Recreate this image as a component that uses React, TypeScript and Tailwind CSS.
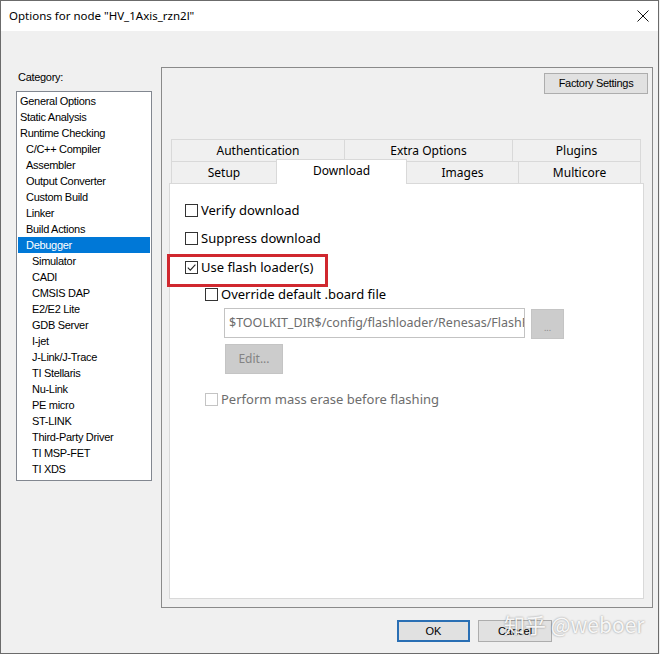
import React from "react"

const categories: [string, number, boolean?][] = [
  ["General Options", 0],
  ["Static Analysis", 0],
  ["Runtime Checking", 0],
  ["C/C++ Compiler", 1],
  ["Assembler", 1],
  ["Output Converter", 1],
  ["Custom Build", 1],
  ["Linker", 1],
  ["Build Actions", 1],
  ["Debugger", 1, true],
  ["Simulator", 2],
  ["CADI", 2],
  ["CMSIS DAP", 2],
  ["E2/E2 Lite", 2],
  ["GDB Server", 2],
  ["I-jet", 2],
  ["J-Link/J-Trace", 2],
  ["TI Stellaris", 2],
  ["Nu-Link", 2],
  ["PE micro", 2],
  ["ST-LINK", 2],
  ["Third-Party Driver", 2],
  ["TI MSP-FET", 2],
  ["TI XDS", 2],
]

const indent = ["pl-[2px]", "pl-[8px]", "pl-[14px]"]

function CheckBox({ checked = false, disabled = false }: { checked?: boolean; disabled?: boolean }) {
  return (
    <div
      className={
        "w-[13px] h-[13px] shrink-0 bg-white border flex items-center justify-center " +
        (disabled ? "border-[#c4c4c4]" : "border-[#333333]")
      }
    >
      {checked && (
        <svg width="11" height="11" viewBox="0 0 11 11">
          <path d="M1.8 5.6 L4.3 8.1 L9.4 2.6" fill="none" stroke="#222" strokeWidth="1.1" />
        </svg>
      )}
    </div>
  )
}

function Option({ label, checked, disabled, className = "" }: { label: string; checked?: boolean; disabled?: boolean; className?: string }) {
  return (
    <div className={"flex items-center h-[13px] " + className}>
      <CheckBox checked={checked} disabled={disabled} />
      <span className={"ml-[3px] text-[13px] whitespace-nowrap " + (disabled ? "text-[#6d6d6d]" : "text-black")}>
        {label}
      </span>
    </div>
  )
}

export default function App() {
  const tab = "flex items-center justify-center h-[22px] border-t border-l border-[#d9d9d9] bg-[#f0f0f0] text-[12px] text-black"

  return (
    <div className="relative w-[660px] h-[654px] bg-[#f0f0f0] font-['Noto_Sans',sans-serif]">
      <div className="w-[659px] h-[654px] border border-[#6b6b6b] flex flex-col">
        {/* title bar */}
        <div className="h-[30px] bg-white flex items-center justify-between pl-[8px] pr-[9px]">
          <span className="text-[11.5px] text-black">Options for node "HV_1Axis_rzn2l"</span>
          <svg width="12" height="12" viewBox="0 0 12 12">
            <path d="M0.5 0.5 L11.5 11.5 M11.5 0.5 L0.5 11.5" stroke="#111" strokeWidth="1" />
          </svg>
        </div>

        <div className="flex font-['Liberation_Sans',sans-serif] tracking-[-0.3px]">
          {/* category list */}
          <div className="ml-[15px] w-[136px] pt-[39px]">
            <div className="h-[14px] leading-[14px] text-[11px] text-black pl-[2px]">Category:</div>
            <div className="mt-[7px] h-[390px] border border-[#828790] bg-white pt-[1px] px-[1px]">
              {categories.map(([name, level, sel]) => (
                <div
                  key={name}
                  className={
                    "h-[16px] leading-[16px] text-[11px] whitespace-nowrap " +
                    indent[level] +
                    (sel ? " bg-[#0078d7] text-white" : " text-black")
                  }
                >
                  {name}
                </div>
              ))}
            </div>
          </div>

          {/* options panel */}
          <div className="ml-[9px] mt-[36px] w-[492px] h-[541px] border border-[#8a8a8a] flex flex-col">
            <div className="flex justify-end pt-[5px] pr-[4px]">
              <div className="w-[104px] h-[21px] bg-[#e1e1e1] border border-[#adadad] flex items-center justify-center text-[11px] text-black">
                Factory Settings
              </div>
            </div>

            <div className="ml-[7px] mt-[45px] w-[475px] font-['Noto_Sans',sans-serif] tracking-normal">
              <div className="flex pl-[2px]">
                <div className={tab + " w-[173px]"}>Authentication</div>
                <div className={tab + " w-[168px]"}>Extra Options</div>
                <div className={tab + " w-[129px] border-r"}>Plugins</div>
              </div>
              <div className="flex pl-[2px] h-[22px]">
                <div className={tab + " w-[105px]"}>Setup</div>
                <div className="relative z-10 -mt-[2px] h-[25px] w-[131px] bg-white border-t border-l border-r border-[#d9d9d9] flex items-start justify-center pt-[2px] text-[12px] text-black">
                  Download
                </div>
                <div className={tab + " w-[111px] border-l-0"}>Images</div>
                <div className={tab + " w-[123px] border-r"}>Multicore</div>
              </div>

              <div className="h-[416px] bg-white border border-[#d9d9d9] pt-[20px] pl-[15px] flex flex-col">
                <Option label="Verify download" />
                <Option label="Suppress download" className="mt-[15px]" />
                <Option label="Use flash loader(s)" checked className="mt-[16px]" />
                <Option label="Override default .board file" className="mt-[14px] ml-[20px]" />
                <div className="flex mt-[7px] ml-[39px]">
                  <div className="w-[301px] h-[30px] border border-[#c3c3c3] bg-white flex items-center pl-[4px] overflow-hidden">
                    <span className="text-[12.5px] text-[#6d6d6d] whitespace-nowrap">
                      $TOOLKIT_DIR$/config/flashloader/Renesas/FlashRZN2L.board
                    </span>
                  </div>
                  <div className="ml-[6px] mt-[1px] w-[33px] h-[30px] bg-[#cccccc] border border-[#c4c4c4] flex items-end justify-center pb-[6px] text-[9px] leading-[9px] text-[#8a8a8a]">
                    ...
                  </div>
                </div>
                <div className="mt-[5px] ml-[40px] w-[58px] h-[30px] bg-[#cccccc] border border-[#c4c4c4] flex items-center justify-center text-[12px] text-[#838383]">
                  Edit...
                </div>
                <Option label="Perform mass erase before flashing" disabled className="mt-[19px] ml-[20px]" />
              </div>
            </div>
          </div>
        </div>

        {/* dialog buttons */}
        <div className="flex mt-[12px] pl-[396px] font-['Liberation_Sans',sans-serif]">
          <div className="w-[73px] h-[22px] bg-[#e1e1e1] border-2 border-[#2a6fb4] flex items-center justify-center text-[11px] text-black">
            OK
          </div>
          <div className="ml-[8px] w-[74px] h-[22px] bg-[#e1e1e1] border border-[#adadad] flex items-center justify-center text-[11px] text-black">
            Cancel
          </div>
        </div>
      </div>

      {/* annotation */}
      <div className="absolute left-[167px] top-[254px] w-[161px] h-[33px] border-[3px] border-[#d0282f]" />

      {/* watermark */}
      <div className="absolute left-[504px] top-[611px] flex items-center text-[21px] leading-[26px] text-white/90 [text-shadow:0_0_2px_rgba(0,0,0,0.45)] font-['Noto_Sans_CJK_SC','Noto_Sans',sans-serif] whitespace-nowrap">
        知乎 @weboer
      </div>
    </div>
  )
}
